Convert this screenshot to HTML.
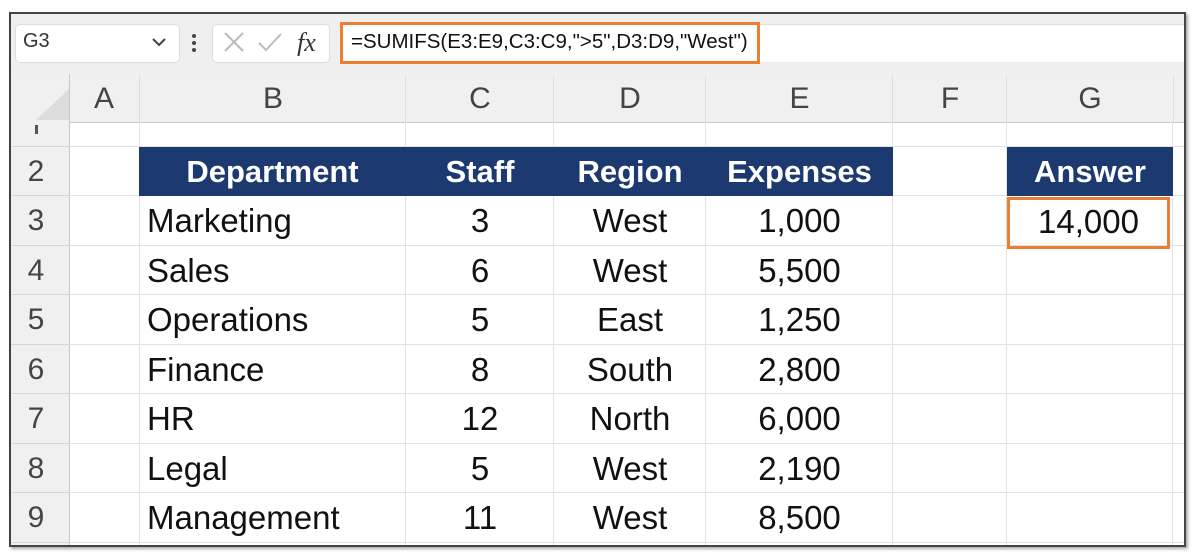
<!DOCTYPE html>
<html><head><style>
body{margin:0;width:1200px;height:557px;background:#fff;position:relative;overflow:hidden;font-family:"Liberation Sans",Arial,sans-serif;}
.abs{position:absolute;}
.frame{left:9px;top:12px;width:1177px;height:535px;border:2px solid #444;box-sizing:border-box;background:#fff;box-shadow:2px 2px 3px #aaa;overflow:hidden;}
.c{position:absolute;display:flex;align-items:center;justify-content:center;}
.hd{color:#444;font-size:30px;}
.cell{font-size:33px;color:#111;}
.nav{background:#1d3a70;color:#fff;font-weight:bold;font-size:31px;}
</style></head><body>
<div class="abs frame">
 <div class="abs" style="left:0;top:0;width:1177px;height:60px;background:#efefef;"></div>
 <div class="abs" style="left:4px;top:10px;width:163px;height:37px;background:#fff;border:1px solid #ddd;border-radius:5px;"></div>
 <div class="abs" style="left:12px;top:16px;font-size:20px;color:#333;">G3</div>
 <svg class="abs" style="left:140px;top:22px" width="16" height="12"><path d="M2 3 L8 9 L14 3" stroke="#444" stroke-width="2" fill="none"/></svg>
 <div class="abs" style="left:181px;top:20px;width:4px;height:4px;background:#444;border-radius:2px"></div>
 <div class="abs" style="left:181px;top:27px;width:4px;height:4px;background:#444;border-radius:2px"></div>
 <div class="abs" style="left:181px;top:34px;width:4px;height:4px;background:#444;border-radius:2px"></div>
 <div class="abs" style="left:201px;top:10px;width:116px;height:37px;background:#fff;border:1px solid #ddd;border-radius:5px;"></div>
 <svg class="abs" style="left:210px;top:16px" width="110" height="26"><path d="M4 3 L22 21 M22 3 L4 21" stroke="#bbb" stroke-width="2"/><path d="M38 13 L45 20 L60 4" stroke="#bbb" stroke-width="2" fill="none"/><text x="76" y="21" font-family="Liberation Serif" font-style="italic" font-size="26" fill="#333">fx</text></svg>
 <div class="abs" style="left:329px;top:10px;width:848px;height:37px;background:#fff;border-top:1px solid #ddd;"></div>
 <div class="abs" style="left:329px;top:8px;width:420px;height:42px;border:3px solid #ed7d31;box-sizing:border-box;"></div>
 <div class="abs" style="left:340px;top:16px;font-size:20.5px;color:#111;">=SUMIFS(E3:E9,C3:C9,"&gt;5",D3:D9,"West")</div>
 <div class="abs" style="left:0;top:60px;width:1177px;height:48px;background:#f0f0f0;border-bottom:1px solid #c8c8c8;"></div>
 <div class="abs" style="left:0;top:60px;width:58px;height:475px;background:#f0f0f0;border-right:1px solid #c8c8c8;"></div>
 <svg class="abs" style="left:25px;top:75px" width="35" height="33"><path d="M33 0 L33 31 L0 31 Z" fill="#dcdcdc"/></svg>
 <div class="c hd" style="left:58px;top:62px;width:70px;height:46px;">A</div>
 <div class="c hd" style="left:128px;top:62px;width:266px;height:46px;border-left:1px solid #ddd;">B</div>
 <div class="c hd" style="left:394px;top:62px;width:148px;height:46px;border-left:1px solid #ddd;">C</div>
 <div class="c hd" style="left:542px;top:62px;width:152px;height:46px;border-left:1px solid #ddd;">D</div>
 <div class="c hd" style="left:694px;top:62px;width:187px;height:46px;border-left:1px solid #ddd;">E</div>
 <div class="c hd" style="left:881px;top:62px;width:114px;height:46px;border-left:1px solid #ddd;">F</div>
 <div class="c hd" style="left:995px;top:62px;width:166px;height:46px;border-left:1px solid #ddd;border-right:1px solid #ddd;">G</div>
 <svg class="abs" style="left:58px;top:108px" width="1120" height="430">
  <g stroke="#e2e2e2" stroke-width="1">
   <line x1="70.5" y1="0" x2="70.5" y2="430"/><line x1="336.5" y1="0" x2="336.5" y2="430"/>
   <line x1="484.5" y1="0" x2="484.5" y2="430"/><line x1="636.5" y1="0" x2="636.5" y2="430"/>
   <line x1="823.5" y1="0" x2="823.5" y2="430"/><line x1="937.5" y1="0" x2="937.5" y2="430"/>
   <line x1="1103.5" y1="0" x2="1103.5" y2="430"/>
   <line x1="0" y1="24.5" x2="1120" y2="24.5"/><line x1="0" y1="73.5" x2="1120" y2="73.5"/>
   <line x1="0" y1="123.5" x2="1120" y2="123.5"/><line x1="0" y1="172.5" x2="1120" y2="172.5"/>
   <line x1="0" y1="222.5" x2="1120" y2="222.5"/><line x1="0" y1="271.5" x2="1120" y2="271.5"/>
   <line x1="0" y1="321.5" x2="1120" y2="321.5"/><line x1="0" y1="370.5" x2="1120" y2="370.5"/>
   <line x1="0" y1="420.5" x2="1120" y2="420.5"/>
  </g>
 </svg>
 <svg class="abs" style="left:0;top:108px" width="58" height="430"><g stroke="#d6d6d6"><line x1="0" y1="24.5" x2="58" y2="24.5"/><line x1="0" y1="73.5" x2="58" y2="73.5"/><line x1="0" y1="123.5" x2="58" y2="123.5"/><line x1="0" y1="172.5" x2="58" y2="172.5"/><line x1="0" y1="222.5" x2="58" y2="222.5"/><line x1="0" y1="271.5" x2="58" y2="271.5"/><line x1="0" y1="321.5" x2="58" y2="321.5"/><line x1="0" y1="370.5" x2="58" y2="370.5"/><line x1="0" y1="420.5" x2="58" y2="420.5"/></g></svg>
 <div class="abs" style="left:24px;top:111px;width:3px;height:9px;background:#555;"></div>
 <div class="c hd" style="left:0;top:133px;width:50px;height:49px;">2</div>
 <div class="c hd" style="left:0;top:182px;width:50px;height:50px;">3</div>
 <div class="c hd" style="left:0;top:232px;width:50px;height:49px;">4</div>
 <div class="c hd" style="left:0;top:281px;width:50px;height:50px;">5</div>
 <div class="c hd" style="left:0;top:331px;width:50px;height:49px;">6</div>
 <div class="c hd" style="left:0;top:380px;width:50px;height:50px;">7</div>
 <div class="c hd" style="left:0;top:430px;width:50px;height:49px;">8</div>
 <div class="c hd" style="left:0;top:479px;width:50px;height:50px;">9</div>
 <div class="c nav" style="left:128px;top:133px;width:267px;height:49px;">Department</div>
 <div class="c nav" style="left:395px;top:133px;width:148px;height:49px;">Staff</div>
 <div class="c nav" style="left:543px;top:133px;width:152px;height:49px;">Region</div>
 <div class="c nav" style="left:695px;top:133px;width:187px;height:49px;">Expenses</div>
 <div class="c nav" style="left:996px;top:133px;width:166px;height:49px;">Answer</div>
 <div class="abs" style="left:996px;top:183px;width:163px;height:52px;border:3px solid #ed7d31;box-sizing:border-box;"></div>
 <div class="c cell" style="left:996px;top:183px;width:163px;height:50px;">14,000</div>
 <div class="c cell" style="left:136px;top:182px;height:50px;justify-content:flex-start;">Marketing</div>
 <div class="c cell" style="left:136px;top:232px;height:49px;justify-content:flex-start;">Sales</div>
 <div class="c cell" style="left:136px;top:281px;height:50px;justify-content:flex-start;">Operations</div>
 <div class="c cell" style="left:136px;top:331px;height:49px;justify-content:flex-start;">Finance</div>
 <div class="c cell" style="left:136px;top:380px;height:50px;justify-content:flex-start;">HR</div>
 <div class="c cell" style="left:136px;top:430px;height:49px;justify-content:flex-start;">Legal</div>
 <div class="c cell" style="left:136px;top:479px;height:50px;justify-content:flex-start;">Management</div>

 <div class="c cell" style="left:395px;top:182px;width:148px;height:50px;">3</div>
 <div class="c cell" style="left:395px;top:232px;width:148px;height:49px;">6</div>
 <div class="c cell" style="left:395px;top:281px;width:148px;height:50px;">5</div>
 <div class="c cell" style="left:395px;top:331px;width:148px;height:49px;">8</div>
 <div class="c cell" style="left:395px;top:380px;width:148px;height:50px;">12</div>
 <div class="c cell" style="left:395px;top:430px;width:148px;height:49px;">5</div>
 <div class="c cell" style="left:395px;top:479px;width:148px;height:50px;">11</div>

 <div class="c cell" style="left:543px;top:182px;width:152px;height:50px;">West</div>
 <div class="c cell" style="left:543px;top:232px;width:152px;height:49px;">West</div>
 <div class="c cell" style="left:543px;top:281px;width:152px;height:50px;">East</div>
 <div class="c cell" style="left:543px;top:331px;width:152px;height:49px;">South</div>
 <div class="c cell" style="left:543px;top:380px;width:152px;height:50px;">North</div>
 <div class="c cell" style="left:543px;top:430px;width:152px;height:49px;">West</div>
 <div class="c cell" style="left:543px;top:479px;width:152px;height:50px;">West</div>

 <div class="c cell" style="left:695px;top:182px;width:187px;height:50px;">1,000</div>
 <div class="c cell" style="left:695px;top:232px;width:187px;height:49px;">5,500</div>
 <div class="c cell" style="left:695px;top:281px;width:187px;height:50px;">1,250</div>
 <div class="c cell" style="left:695px;top:331px;width:187px;height:49px;">2,800</div>
 <div class="c cell" style="left:695px;top:380px;width:187px;height:50px;">6,000</div>
 <div class="c cell" style="left:695px;top:430px;width:187px;height:49px;">2,190</div>
 <div class="c cell" style="left:695px;top:479px;width:187px;height:50px;">8,500</div>
</div>
</body></html>
